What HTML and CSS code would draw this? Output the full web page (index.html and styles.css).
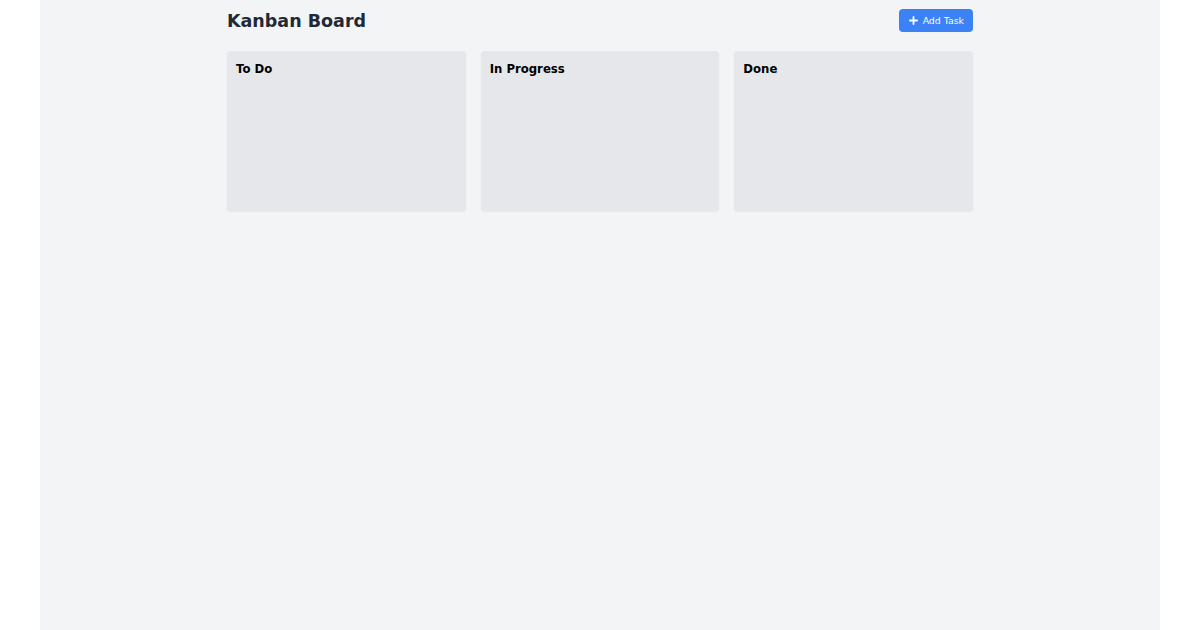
FILE: index.html
```html
<!DOCTYPE html>
<html lang="en">
<head>
    <meta charset="UTF-8">
    <meta name="viewport" content="width=device-width, initial-scale=1.0">
    <title>Kanban Board</title>
    <link rel="stylesheet" href="styles.css">
</head>
<body>
    <div class="page">
        <div class="board">
            <!-- Header -->
            <div class="header">
                <h1>Kanban Board</h1>
                <button class="add-btn">
                    <svg width="9" height="9" viewBox="0 0 10 10"><path d="M5 1v8M1 5h8" stroke="#fff" stroke-width="2" stroke-linecap="round"/></svg>
                    Add Task
                </button>
            </div>

            <!-- Columns -->
            <div class="columns">
                <div class="column"><h2>To Do</h2></div>
                <div class="column"><h2>In Progress</h2></div>
                <div class="column"><h2>Done</h2></div>
            </div>
        </div>
    </div>
</body>
</html>
```
FILE: styles.css
```css
body {
    margin: 0;
    background: #fff;
    font-family: "DejaVu Sans", sans-serif;
}
.page {
    width: 1120px;
    min-height: 630px;
    margin: 0 auto;
    background: #f3f4f6;
}
.board {
    width: 746px;
    margin: 0 auto;
    padding-top: 9px;
}
.header {
    display: flex;
    justify-content: space-between;
    align-items: center;
    height: 23px;
}
h1 {
    margin: 0;
    font-size: 17.5px;
    font-weight: bold;
    color: #1f2937;
}
.add-btn {
    display: flex;
    align-items: center;
    gap: 5px;
    height: 23px;
    padding: 0 9px 0 10px;
    background: #3b82f6;
    color: #fff;
    border: none;
    border-radius: 4px;
    font-family: inherit;
    font-size: 9.4px;
}
.columns {
    display: grid;
    grid-template-columns: repeat(3, 1fr);
    gap: 15px;
    margin-top: 19px;
}
.column {
    height: 160px;
    box-sizing: border-box;
    padding: 11px 9px;
    background: #e5e7eb;
    border-radius: 4px;
    box-shadow: 0 1px 2px rgba(0, 0, 0, 0.05);
}
h2 {
    margin: 0;
    font-size: 11.7px;
    font-weight: bold;
    color: #000;
}
```
